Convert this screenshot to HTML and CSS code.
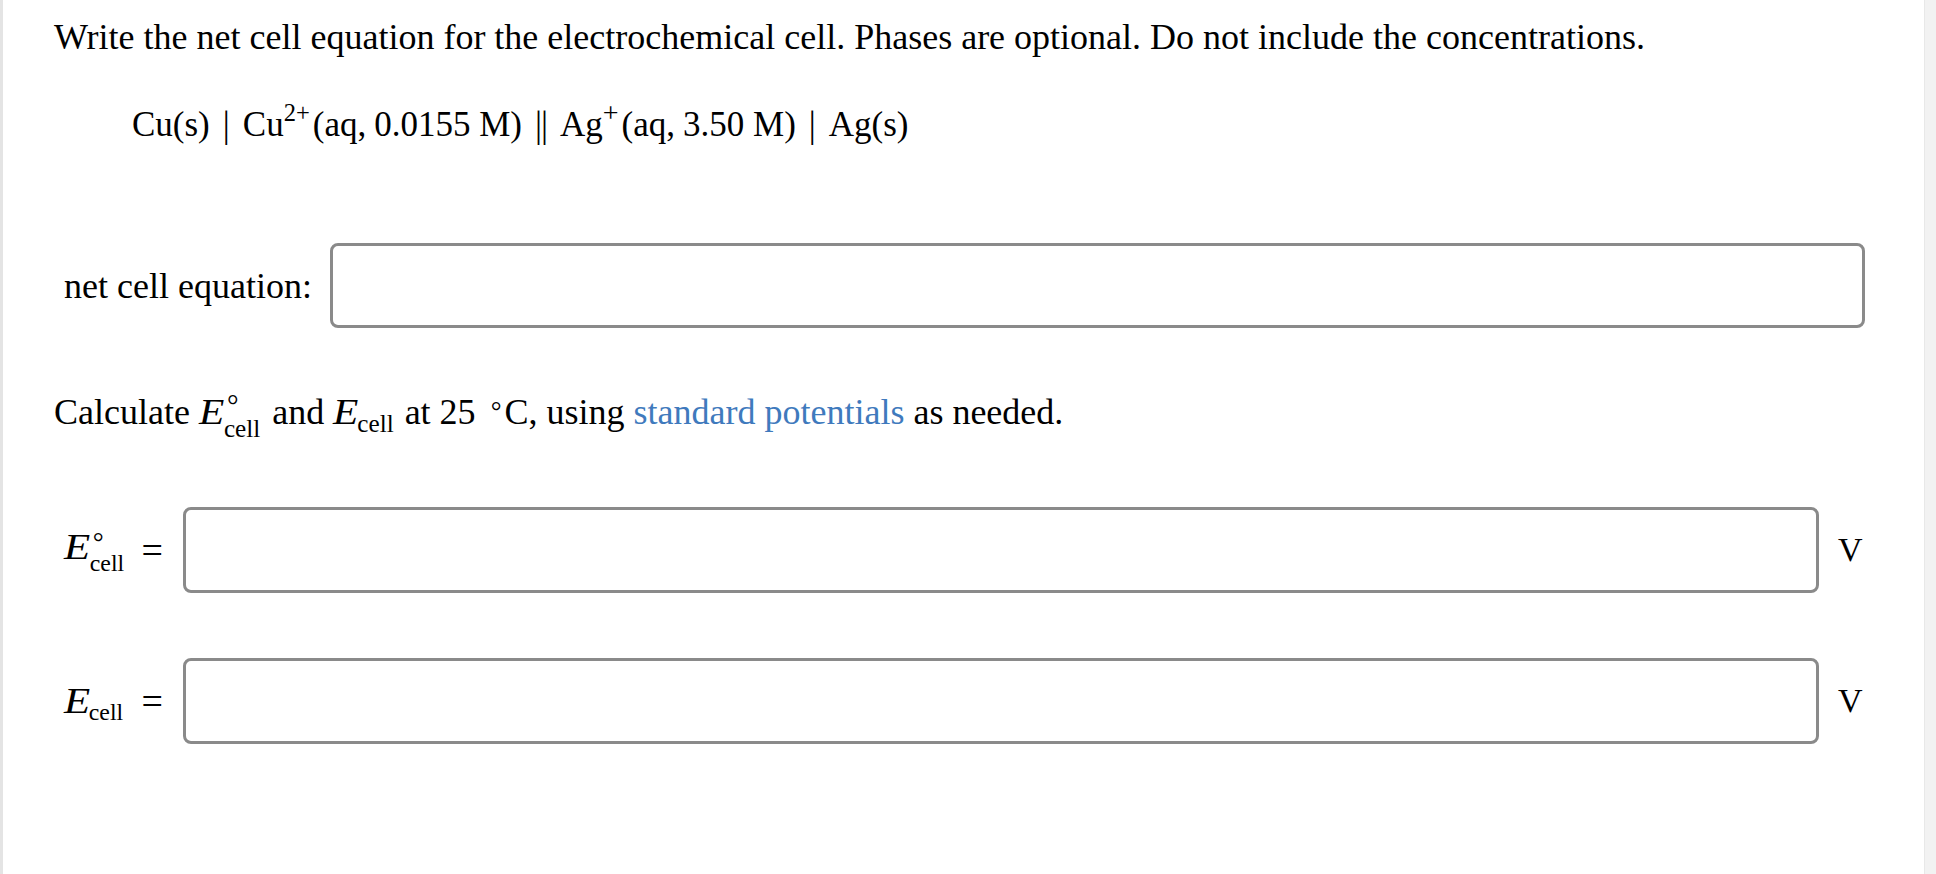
FILE: index.html
```html
<!DOCTYPE html>
<html lang="en">
<head>
<meta charset="utf-8">
<title>Electrochemical cell</title>
<link rel="stylesheet" href="styles.css">
</head>
<body>
<div class="page">
  <main class="content">
    <p class="prompt">Write the net cell equation for the electrochemical cell. Phases are optional. Do not include the concentrations.</p>
    <div class="cell-notation math">Cu(s)<span class="bar">|</span>Cu<sup class="charge">2+</sup>(aq,<span class="thin"></span>0.0155&nbsp;M)<span class="bar dbar">||</span>Ag<sup class="charge plus">+</sup>(aq,<span class="thin"></span>3.50&nbsp;M)<span class="bar">|</span>Ag(s)</div>

    <div class="answer-row net-row">
      <span class="text-label">net cell equation:</span>
      <div class="input-box"></div>
    </div>

    <p class="prompt calc">Calculate <span class="math"><i class="var">E</i><span class="ss"><span class="ss-top">°</span><span class="ss-bot">cell</span></span></span> and <span class="math"><i class="var">E</i><span class="sub">cell</span></span> at 25 <span class="math"><span class="deg">°</span>C</span>, using <a class="link" href="#">standard potentials</a> as needed.</p>

    <div class="answer-row e-row">
      <span class="math-label math"><span class="expr"><i class="var">E</i><span class="ss"><span class="ss-top">°</span><span class="ss-bot">cell</span></span></span><span class="eq">=</span></span>
      <div class="input-box"></div>
      <span class="unit math">V</span>
    </div>

    <div class="answer-row e-row second">
      <span class="math-label math"><span class="expr"><i class="var">E</i><span class="sub">cell</span></span><span class="eq">=</span></span>
      <div class="input-box"></div>
      <span class="unit math">V</span>
    </div>
  </main>
  <aside class="gutter"></aside>
</div>
</body>
</html>
```

FILE: styles.css
```css
html, body {
  margin: 0;
  padding: 0;
  background: #ffffff;
}

body {
  font-family: "Liberation Serif", "Times New Roman", serif;
  color: #000000;
}

.page {
  display: flex;
  min-height: 874px;
}

.content {
  flex: 1;
  border-left: 3px solid #e4e4e4;
  padding: 15px 59px 0 51px;
}

.gutter {
  width: 11px;
  background: #f2f2f2;
  border-left: 1px solid #e8e8e8;
}

.prompt {
  margin: 0;
  font-size: 36px;
  line-height: 44px;
  height: 44px;
  white-space: nowrap;
}

.math {
  font-family: "Liberation Serif", "Times New Roman", serif;
}

.cell-notation {
  margin-top: 44px;
  padding-left: 78px;
  font-size: 35px;
  line-height: 44px;
  height: 44px;
  white-space: nowrap;
}

.bar {
  display: inline-block;
  margin: 0 13px;
  transform: scaleY(1.1);
}

.dbar {
  letter-spacing: -1px;
}

.thin {
  display: inline-block;
  width: 8px;
}

.charge {
  font-size: 0.7em;
  line-height: 0;
  vertical-align: 0.62em;
  margin-right: 3px;
}

.charge.plus {
  font-size: 0.8em;
  vertical-align: 0.5em;
}

.answer-row {
  display: flex;
  align-items: center;
  padding-left: 10px;
}

.net-row {
  margin-top: 96px;
  gap: 18px;
}

.e-row {
  margin-top: 74px;
}

.e-row.second {
  margin-top: 65px;
}

.text-label {
  font-size: 36px;
  line-height: 44px;
  white-space: nowrap;
}

.input-box {
  flex: 1;
  height: 86px;
  box-sizing: border-box;
  border: 3px solid #8a8a8a;
  border-radius: 8px;
  background: #ffffff;
}

.net-row .input-box {
  height: 85px;
}

.calc {
  margin-top: 61px;
}

.var {
  display: inline-block;
  font-style: italic;
  margin-right: 2px;
  transform: scaleX(1.15);
  transform-origin: left center;
}

.ss {
  display: inline-block;
  font-size: 0.7em;
  line-height: 1;
  vertical-align: -0.5em;
  margin-left: 1px;
  margin-right: 3px;
}

.ss-top,
.ss-bot {
  display: block;
}

.ss-top {
  height: 0.9em;
  line-height: 1.1;
  font-size: 1.15em;
  padding-left: 3px;
}

.sub {
  font-size: 0.7em;
  vertical-align: -0.3em;
  line-height: 0;
  margin-right: 2px;
}

.deg {
  font-size: 0.75em;
  vertical-align: 0.15em;
  margin-left: 6px;
  margin-right: 3px;
}

.link {
  color: #3f7abd;
  text-decoration: none;
}

.math-label {
  display: flex;
  align-items: center;
  justify-content: space-between;
  font-size: 34px;
  line-height: 44px;
  width: 99px;
  margin-right: 20px;
  white-space: nowrap;
}

.expr {
  display: block;
}

.math-label .var {
  font-size: 1.05em;
  margin-right: 3px;
  transform: scaleX(1.2);
}

.eq {
  font-size: 38px;
}

.unit {
  font-size: 34px;
  line-height: 44px;
  margin-left: 19px;
  width: 27px;
}
```
